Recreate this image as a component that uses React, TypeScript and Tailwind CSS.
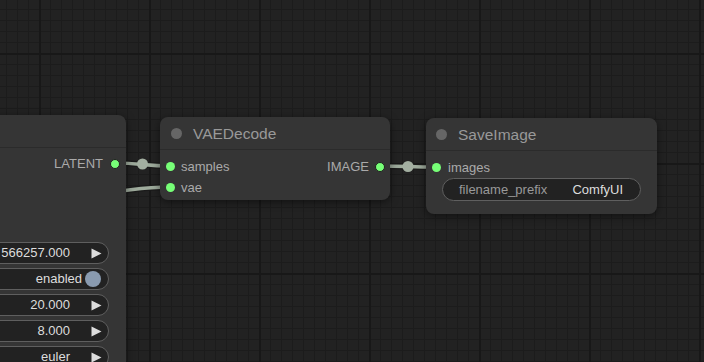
import React from "react";

const font = { fontFamily: '"Liberation Sans", Arial, sans-serif' };

const SlotDot = ({ output = false }: { output?: boolean }) => (
  <span
    className={
      output
        ? "w-[10px] h-[10px] rounded-full bg-[#7f7] border border-[#1f1f1f] shrink-0"
        : "w-[9px] h-[9px] rounded-full bg-[#7f7] shrink-0"
    }
  />
);

const Title = ({ text, dotPad }: { text: string; dotPad: string }) => (
  <div className={`h-[33px] pt-[1px] flex items-center ${dotPad} border-b border-[#2b2b2b]`}>
    <span className="w-[11px] h-[11px] rounded-full bg-[#666] shrink-0" />
    <span className="ml-[11px] text-[15.5px] text-[#999]">{text}</span>
  </div>
);

const NumberWidget = ({ value }: { value: string }) => (
  <div className="h-[22px] rounded-full bg-[#222] border border-[#5f5f5f] flex items-center justify-end pr-[6px]">
    <span className="text-[13px] text-[#ddd]">{value}</span>
    <svg width="11" height="11" viewBox="0 0 11 11" className="ml-[21px]">
      <path d="M0.5 0.5 L10.5 5.5 L0.5 10.5 Z" fill="#ddd" />
    </svg>
  </div>
);

export default function App() {
  return (
    <div
      style={font}
      className="relative w-[704px] h-[362px] overflow-hidden bg-[#222] bg-[linear-gradient(to_right,#181818_2px,transparent_2px),linear-gradient(to_bottom,#181818_2px,transparent_2px),linear-gradient(to_right,#1c1c1c_1px,transparent_1px),linear-gradient(to_bottom,#1c1c1c_1px,transparent_1px)] bg-[size:110px_110px,110px_110px,11px_11px,11px_11px] bg-[position:39px_53px,39px_53px,6px_9px,6px_9px]"
    >
      {/* links */}
      <svg className="absolute inset-0" width="704" height="362">
        <g fill="none" strokeLinecap="round">
          <path d="M115 163 C140 163, 145 166, 170 166" stroke="#1a1a1a" strokeWidth="6" />
          <path d="M-200 260 C-80 260, 60 187, 170 187" stroke="#1a1a1a" strokeWidth="6" />
          <path d="M380 166 C405 166, 411 167, 436 167" stroke="#1a1a1a" strokeWidth="6" />
          <path d="M115 163 C140 163, 145 166, 170 166" stroke="#9eab9c" strokeWidth="3.5" />
          <path d="M-200 260 C-80 260, 60 187, 170 187" stroke="#9eab9c" strokeWidth="3.5" />
          <path d="M380 166 C405 166, 411 167, 436 167" stroke="#9eab9c" strokeWidth="3.5" />
        </g>
        <circle cx="142.5" cy="164" r="5.5" fill="#a3afa1" />
        <circle cx="408" cy="166.5" r="5.5" fill="#a3afa1" />
      </svg>

      {/* KSampler (partly off-canvas) */}
      <div className="absolute left-[-174px] top-[115px] w-[300px] h-[300px] rounded-[8px] bg-[#353535] shadow-[0_2px_8px_rgba(0,0,0,0.5)] flex flex-col">
        <div className="h-[33px] border-b border-[#2b2b2b]" />
        <div className="mt-[5px] h-[21px] flex items-center justify-end pr-[6px] gap-[7px]">
          <span className="text-[13px] text-[#aaa]">LATENT</span>
          <SlotDot output />
        </div>
        <div className="mt-[68px] flex flex-col gap-[4px] pl-[16px] pr-[17px]">
          <NumberWidget value="566257.000" />
          <div className="h-[22px] rounded-full bg-[#222] border border-[#5f5f5f] flex items-center justify-end pr-[7px]">
            <span className="text-[13px] text-[#ddd]">enabled</span>
            <span className="ml-[3px] w-[16px] h-[16px] rounded-full bg-[#8a9bb0]" />
          </div>
          <NumberWidget value="20.000" />
          <NumberWidget value="8.000" />
          <NumberWidget value="euler" />
        </div>
      </div>

      {/* VAEDecode */}
      <div className="absolute left-[160px] top-[117px] w-[230px] h-[83px] rounded-[8px] bg-[#353535] shadow-[0_2px_8px_rgba(0,0,0,0.5)] flex flex-col">
        <Title text="VAEDecode" dotPad="pl-[11px]" />
        <div className="mt-[6px] flex justify-between">
          <div className="flex flex-col">
            <div className="h-[21px] flex items-center pl-[6px] gap-[6px]">
              <SlotDot />
              <span className="text-[13px] text-[#aaa]">samples</span>
            </div>
            <div className="h-[21px] flex items-center pl-[6px] gap-[6px]">
              <SlotDot />
              <span className="text-[13px] text-[#aaa]">vae</span>
            </div>
          </div>
          <div className="h-[21px] flex items-center pr-[5px] gap-[6px]">
            <span className="text-[13px] text-[#aaa]">IMAGE</span>
            <SlotDot output />
          </div>
        </div>
      </div>

      {/* SaveImage */}
      <div className="absolute left-[426px] top-[118px] w-[231px] h-[96px] rounded-[8px] bg-[#353535] shadow-[0_2px_8px_rgba(0,0,0,0.5)] flex flex-col">
        <Title text="SaveImage" dotPad="pl-[10px]" />
        <div className="mt-[6px] h-[21px] flex items-center pl-[6px] gap-[7px]">
          <SlotDot />
          <span className="text-[13px] text-[#aaa]">images</span>
        </div>
        <div className="mx-[16px] h-[23px] rounded-full bg-[#222] border border-[#5f5f5f] flex items-center justify-between pl-[16px] pr-[17px]">
          <span className="text-[13px] text-[#999]">filename_prefix</span>
          <span className="text-[13px] text-[#ddd]">ComfyUI</span>
        </div>
      </div>
    </div>
  );
}
